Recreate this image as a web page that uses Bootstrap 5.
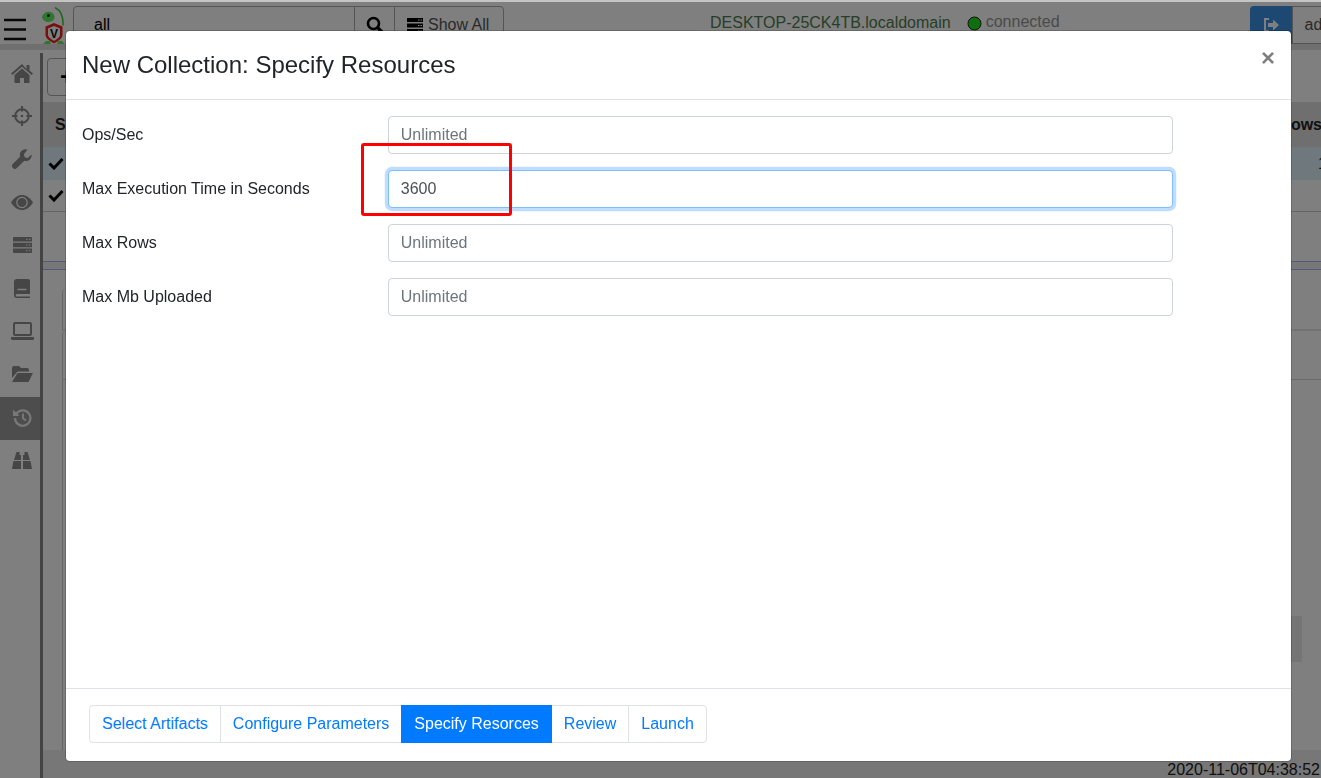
<!DOCTYPE html>
<html lang="en">
<head>
<meta charset="utf-8">
<title>New Collection</title>
<link href="https://cdn.jsdelivr.net/npm/bootstrap@5.3.0/dist/css/bootstrap.min.css" rel="stylesheet">
<style>
html,body{height:778px;overflow:hidden}
body{font-family:"Liberation Sans",Arial,sans-serif;font-size:16px;color:#212529;background:#fff;display:flex;flex-direction:column}
.top-strip{height:2px;background:#c4c4c4;flex:none;position:relative;z-index:1060}
.topbar{height:42px;flex:none;display:flex;align-items:flex-start;background:#fff;overflow:hidden}
.burger{width:22px;margin:16px 0 0 4px;flex:none;color:#111}
.logo-mark{margin:5px 0 0 16px;width:24px;height:38px;flex:none}
.search-box{margin:4px 0 0 7px;display:flex;flex:none}
.search-box>div{height:38px;border:1px solid #aaa;display:flex;align-items:center;background:#fff;color:#555}
.field-all{width:282px;padding-left:20px;color:#000!important;border-radius:4px 0 0 4px}
.field-find{width:41px;margin-left:-1px;justify-content:center;color:#000!important}
.field-show{width:110px;margin-left:-1px;padding-left:12px;gap:5px;border-radius:0 4px 4px 0}
.host-name{margin:9px 0 0 206px;color:#4d7c4d;white-space:nowrap;flex:none}
.conn-dot{margin:14px 0 0 16px;flex:none}
.conn-text{margin:8px 0 0 4px;color:#949494;flex:none}
.signout{margin:4px 0 0 190px;width:42px;height:38px;flex:none;background:#3890e4;border-radius:4px 0 0 4px;color:#fff;display:flex;align-items:center;justify-content:center}
.user-box{margin-top:4px;width:60px;height:38px;flex:none;border:1px solid #aaa;padding:6px 0 0 12px;color:#555;margin-right:-40px}
.topbar-rule{height:6px;flex:none;background:#dedede}
.work-row{flex:1;display:flex;min-height:0}
.side-rail{width:43px;flex:none;margin-top:3px;border-right:3px solid #888;color:#8c8c8c}
.rail-item{height:43px;display:flex;align-items:center;justify-content:center;padding:0 0 3px 4px}
.rail-item.on{background:#9a9a9a;color:#f0f0f0}
.work-col{flex:1;min-width:0;display:flex;flex-direction:column}
.work-pane{flex:1;min-height:0;display:flex;flex-direction:column}
.tool-row{height:52px;flex:none;padding:8px 0 0 4px}
.plus-btn{width:40px;height:38px;border:1px solid #aaa;border-radius:4px;font-weight:700;display:flex;align-items:center;justify-content:center;font-size:24px;color:#000}
.grid-head{height:45px;flex:none;background:#dedede;font-weight:700;display:flex;justify-content:space-between;align-items:center;padding:0 0 0 12px;overflow:hidden;color:#222}
.grid-row{height:32px;flex:none;display:flex;justify-content:space-between;align-items:center;padding-left:5px;overflow:hidden}
.grid-row.sel{height:33px;background:#dcf0fa}
.grid-last{border-bottom:1px solid #ccc}
.head-end{margin-right:-1px}
.row-end{margin-right:-6px}
.split-bar{margin-top:49px;height:9px;flex:none;background:#eee;border-top:1px solid #a0b8ff;border-bottom:1px solid #a0b8ff}
.lower-pane{flex:1;min-height:0;padding:19px 0 0 19px;display:flex;flex-direction:column}
.tab-line{height:42px;flex:none;border-left:1px solid #ccc;border-bottom:2px solid #e6e6e6;border-radius:4px 0 0 0}
.tab-box{height:49px;flex:none;border-left:1px solid #ccc;border-bottom:1px solid #d4d4d4;border-radius:4px 0 0 0}
.tab-rest{flex:1;min-height:0;display:flex;flex-direction:column;border-left:1px solid #ccc}
.scroll-stub{margin:auto 19px 88px auto;width:30px;height:46px;flex:none;background:#eaeaea}
.foot-bar{height:28px;flex:none;background:#eee;text-align:right;padding:10px 1px 0 0;line-height:19px;white-space:nowrap;color:#222}
.modal-backdrop{top:2px;height:776px}
.wizard-shell{display:block}
.wizard-dialog{max-width:1227px;width:1227px;margin:30px 0 0 65px}
.wizard-content{height:732px;border-radius:4.8px}
.wizard-head{height:69px;padding:16px;border-bottom:1px solid #dee2e6;align-items:flex-start}
.wizard-title{font-size:24px;line-height:36px;font-weight:400;margin:0;color:#212529}
.wizard-x{background:none;border:0;padding:0;margin-top:-1px;font-size:24px;font-weight:700;line-height:24px;color:#000;opacity:.5}
.wizard-body{padding:16px;position:relative}
.wizard-body .row{--bs-gutter-x:30px;margin-bottom:16px}
.wizard-body label{font-size:16px;color:#212529}
.wizard-body .form-control{font-size:16px;color:#495057;border-color:#ced4da;border-radius:4px;height:38px;font-family:inherit}
.wizard-body .form-control::placeholder{color:#6c757d;opacity:1}
.wizard-body .form-control.lit{border-color:#80bdff;box-shadow:0 0 0 3.2px rgba(0,123,255,.25)}
.mark-box{position:absolute;left:295px;top:43px;width:151px;height:73px;border:3px solid #f00;border-radius:3px;pointer-events:none}
.wizard-foot{height:73px;padding:16px 23px;border-top:1px solid #dee2e6;display:flex;align-items:flex-start}
.wizard-foot .pagination{--bs-pagination-color:#007bff;--bs-pagination-active-bg:#007bff;--bs-pagination-active-border-color:#007bff;--bs-pagination-border-color:#dee2e6;--bs-pagination-hover-color:#007bff;--bs-pagination-border-radius:4px;--bs-pagination-font-size:16px}
</style>
</head>
<body>
<div class="top-strip"></div>
<header class="topbar">
  <svg class="burger" viewBox="0 0 22 24" height="24"><path d="M0 2h22M0 11.500h22M0 21h22" stroke="currentColor" stroke-width="2.600"/></svg>
  <svg class="logo-mark" viewBox="0 0 24 38">
    <path d="M13 .5c6 3 8.500 9 8 18" fill="none" stroke="#3fd03f" stroke-width="1.600"/>
    <path d="M0 10c1-4 5-6 8-5 3 .5 5 3 4.500 6-1 3-4 4-6 4-3 0-6-2-6.500-5z" fill="#60ea60"/>
    <circle cx="6.500" cy="8.500" r="1.500" fill="#0a3a0a"/>
    <path d="M4 34l-3 3h8l-1-3zM16 34l-1 3h8l-3-3z" fill="#60ea60"/>
    <path d="M12 16l8.500 3.500v8c0 4-4 6.500-8.500 9-4.500-2.500-8.500-5-8.500-9v-8z" fill="#f02020"/>
    <path d="M12 19l6 2.400v6c0 2.800-3 4.600-6 6.300-3-1.700-6-3.500-6-6.300v-6z" fill="#fff"/>
    <text x="12" y="31" text-anchor="middle" font-family="Liberation Sans" font-weight="700" font-size="12" fill="#111">V</text>
  </svg>
  <div class="search-box">
    <div class="field-all">all</div>
    <div class="field-find"><svg width="18" height="18" viewBox="0 0 18 18"><circle cx="7.500" cy="7.500" r="5.500" fill="none" stroke="currentColor" stroke-width="2.600"/><path d="M11.500 11.500l5 5" stroke="currentColor" stroke-width="3.200"/></svg></div>
    <div class="field-show"><svg width="16" height="15" viewBox="0 0 16 15"><path d="M0 0h16v4H0zM0 5.500h16v4H0zM0 11h16v4H0z" fill="#000"/><path d="M11 2h1.500M13.500 2H15M11 7.500h1.500M13.500 7.500H15M11 13h1.500M13.500 13H15" stroke="#fff"/></svg>Show All</div>
  </div>
  <div class="host-name">DESKTOP-25CK4TB.localdomain</div>
  <svg class="conn-dot" width="15" height="15" viewBox="0 0 15 15"><circle cx="7.500" cy="7.500" r="6.500" fill="#1ade1a" stroke="#222"/></svg>
  <div class="conn-text">connected</div>
  <div class="signout"><svg width="16" height="14" viewBox="0 0 16 14"><path d="M6 1H2v12h4" fill="none" stroke="currentColor" stroke-width="2"/><path d="M5 5h5V1.500L16 7l-6 5.500V9H5z" fill="currentColor"/></svg></div>
  <div class="user-box">admin</div>
</header>
<div class="topbar-rule"></div>
<div class="work-row">
  <nav class="side-rail">
    <div class="rail-item"><svg width="22" height="20" viewBox="0 0 22 20"><path d="M11 1L0 10.500l1.300 1.500L11 3.700l9.700 8.300 1.300-1.500-3.500-3V2h-3v3.900z" fill="currentColor"/><path d="M11 5.500L3.500 12v8H9v-5h4v5h5.500v-8z" fill="currentColor"/></svg></div>
    <div class="rail-item"><svg width="20" height="20" viewBox="0 0 20 20"><g fill="none" stroke="currentColor" stroke-width="2"><circle cx="10" cy="10" r="6.800"/><path d="M10 0v5.500M10 14.500V20M0 10h5.500M14.500 10H20"/></g><circle cx="10" cy="10" r="1.300" fill="currentColor"/></svg></div>
    <div class="rail-item"><svg width="20" height="20" viewBox="0 0 20 20"><path d="M19.500 5.500l-3.800 3.600-3-.8-.8-3L15.500.7A5.500 5.500 0 0 0 8.200 7.600L.8 15a2.900 2.900 0 0 0 4.100 4.100l7.400-7.400a5.500 5.500 0 0 0 7.200-6.200z" fill="currentColor"/></svg></div>
    <div class="rail-item"><svg width="22" height="15" viewBox="0 0 22 15"><path d="M0 7.500C3 2.500 7 0 11 0s8 2.500 11 7.500c-3 5-7 7.500-11 7.500S3 12.500 0 7.500z" fill="currentColor"/><circle cx="11" cy="7.500" r="5.200" fill="none" stroke="#fff" stroke-width="1.200"/></svg></div>
    <div class="rail-item"><svg width="19" height="16" viewBox="0 0 19 16"><path d="M0 1a1 1 0 0 1 1-1h17a1 1 0 0 1 1 1v3.500H0zM0 5.800h19v4.400H0zM0 11.500h19V15a1 1 0 0 1-1 1H1a1 1 0 0 1-1-1z" fill="currentColor"/><path d="M13 2.300h1.500M16 2.300h1.500M13 8h1.500M16 8h1.500M13 13.700h1.500M16 13.700h1.500" stroke="#fff"/></svg></div>
    <div class="rail-item"><svg width="16" height="19" viewBox="0 0 16 19"><path d="M3 0h11a2 2 0 0 1 2 2v13H3a1.300 1.300 0 0 0 0 2.600h13V19H3a3 3 0 0 1-3-3V3a3 3 0 0 1 3-3z" fill="currentColor"/><path d="M3.500 10.500h9" stroke="#fff" stroke-width="1.500"/></svg></div>
    <div class="rail-item"><svg width="23" height="18" viewBox="0 0 23 18"><rect x="3" y="1" width="17" height="12" rx="1" fill="none" stroke="currentColor" stroke-width="2"/><path d="M0 15h23v1.500a1.500 1.500 0 0 1-1.500 1.500h-20A1.500 1.500 0 0 1 0 16.500z" fill="currentColor"/></svg></div>
    <div class="rail-item"><svg width="21" height="16" viewBox="0 0 21 16"><path d="M0 2a2 2 0 0 1 2-2h5l2 2h6a2 2 0 0 1 2 2v1.500H5.500L0 12z" fill="currentColor"/><path d="M5.500 7H21l-4.500 9H0z" fill="currentColor"/></svg></div>
    <div class="rail-item on"><svg width="19" height="19" viewBox="0 0 19 19"><path d="M3.500 5.500A7.700 7.700 0 1 1 2 10" fill="none" stroke="currentColor" stroke-width="2.200"/><path d="M0 1.500v6.500h6.500z" fill="currentColor"/><path d="M10 5.500v4.800l3 2.200" fill="none" stroke="currentColor" stroke-width="1.900"/></svg></div>
    <div class="rail-item"><svg width="20" height="17" viewBox="0 0 20 17"><path d="M4.500 0h3v3H9v5H2zM15.500 0h-3v3H11v5h7zM1.500 9H9v8H0zM18.500 9H11v8h9z" fill="currentColor"/></svg></div>
  </nav>
  <div class="work-col">
    <main class="work-pane">
      <div class="tool-row"><div class="plus-btn">+</div></div>
      <div class="grid-head"><span>State</span><span class="head-end">Rows</span></div>
      <div class="grid-row sel"><svg width="16" height="13" viewBox="0 0 16 13"><path d="M1.500 6.500l4.500 4.500 8.500-9" fill="none" stroke="#000" stroke-width="3"/></svg><span class="row-end">1</span></div>
      <div class="grid-row grid-last"><svg width="16" height="13" viewBox="0 0 16 13"><path d="M1.500 6.500l4.500 4.500 8.500-9" fill="none" stroke="#000" stroke-width="3"/></svg></div>
      <div class="split-bar"></div>
      <div class="lower-pane">
        <div class="tab-line"></div>
        <div class="tab-box"></div>
        <div class="tab-rest"><div class="scroll-stub"></div></div>
      </div>
    </main>
    <footer class="foot-bar">2020-11-06T04:38:52</footer>
  </div>
</div>

<div class="modal-backdrop fade show"></div>
<div class="modal fade show wizard-shell" role="dialog" aria-modal="true">
  <div class="modal-dialog wizard-dialog">
    <div class="modal-content wizard-content">
      <div class="modal-header wizard-head">
        <h5 class="modal-title wizard-title">New Collection: Specify Resources</h5>
        <button type="button" class="wizard-x" aria-label="Close">×</button>
      </div>
      <div class="modal-body wizard-body">
        <div class="row">
          <label class="col-3 col-form-label">Ops/Sec</label>
          <div class="col-8"><input class="form-control" placeholder="Unlimited"></div>
        </div>
        <div class="row">
          <label class="col-3 col-form-label">Max Execution Time in Seconds</label>
          <div class="col-8"><input class="form-control lit" value="3600"></div>
        </div>
        <div class="row">
          <label class="col-3 col-form-label">Max Rows</label>
          <div class="col-8"><input class="form-control" placeholder="Unlimited"></div>
        </div>
        <div class="row">
          <label class="col-3 col-form-label">Max Mb Uploaded</label>
          <div class="col-8"><input class="form-control" placeholder="Unlimited"></div>
        </div>
        <div class="mark-box"></div>
      </div>
      <div class="wizard-foot">
        <ul class="pagination mb-0">
          <li class="page-item"><a class="page-link" href="#">Select Artifacts</a></li>
          <li class="page-item"><a class="page-link" href="#">Configure Parameters</a></li>
          <li class="page-item active"><a class="page-link" href="#">Specify Resorces</a></li>
          <li class="page-item"><a class="page-link" href="#">Review</a></li>
          <li class="page-item"><a class="page-link" href="#">Launch</a></li>
        </ul>
      </div>
    </div>
  </div>
</div>
<script src="https://cdn.jsdelivr.net/npm/bootstrap@5.3.0/dist/js/bootstrap.bundle.min.js"></script>
</body>
</html>
